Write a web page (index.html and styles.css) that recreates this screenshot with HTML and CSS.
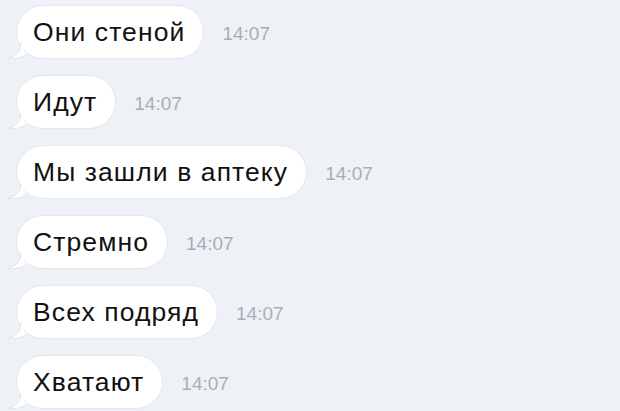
FILE: index.html
```html
<!DOCTYPE html>
<html lang="ru">
<head>
<meta charset="utf-8">
<link rel="stylesheet" href="styles.css">
</head>
<body>
<div class="chat">
  <div class="row"><div class="bubble"><svg class="tail" viewBox="0 0 20 16"><path d="M14 0 C14 8 10 13 0 16 C8 16 14 15 19 12 Z" fill="#fff"/><path d="M14 0 C14 8 10 13 0 16 C8 16 14 15 19 12" fill="none" stroke="#dfe3ea" stroke-width="1"/></svg><span class="text">Они стеной</span></div><span class="time">14:07</span></div>
  <div class="row"><div class="bubble"><svg class="tail" viewBox="0 0 20 16"><path d="M14 0 C14 8 10 13 0 16 C8 16 14 15 19 12 Z" fill="#fff"/><path d="M14 0 C14 8 10 13 0 16 C8 16 14 15 19 12" fill="none" stroke="#dfe3ea" stroke-width="1"/></svg><span class="text">Идут</span></div><span class="time">14:07</span></div>
  <div class="row"><div class="bubble"><svg class="tail" viewBox="0 0 20 16"><path d="M14 0 C14 8 10 13 0 16 C8 16 14 15 19 12 Z" fill="#fff"/><path d="M14 0 C14 8 10 13 0 16 C8 16 14 15 19 12" fill="none" stroke="#dfe3ea" stroke-width="1"/></svg><span class="text">Мы зашли в аптеку</span></div><span class="time">14:07</span></div>
  <div class="row"><div class="bubble"><svg class="tail" viewBox="0 0 20 16"><path d="M14 0 C14 8 10 13 0 16 C8 16 14 15 19 12 Z" fill="#fff"/><path d="M14 0 C14 8 10 13 0 16 C8 16 14 15 19 12" fill="none" stroke="#dfe3ea" stroke-width="1"/></svg><span class="text">Стремно</span></div><span class="time">14:07</span></div>
  <div class="row"><div class="bubble"><svg class="tail" viewBox="0 0 20 16"><path d="M14 0 C14 8 10 13 0 16 C8 16 14 15 19 12 Z" fill="#fff"/><path d="M14 0 C14 8 10 13 0 16 C8 16 14 15 19 12" fill="none" stroke="#dfe3ea" stroke-width="1"/></svg><span class="text">Всех подряд</span></div><span class="time">14:07</span></div>
  <div class="row"><div class="bubble"><svg class="tail" viewBox="0 0 20 16"><path d="M14 0 C14 8 10 13 0 16 C8 16 14 15 19 12 Z" fill="#fff"/><path d="M14 0 C14 8 10 13 0 16 C8 16 14 15 19 12" fill="none" stroke="#dfe3ea" stroke-width="1"/></svg><span class="text">Хватают</span></div><span class="time">14:07</span></div>
</div>
</body>
</html>
```
FILE: styles.css
```css
html, body {
  margin: 0;
  padding: 0;
  background: #eef1f6;
  width: 620px;
  height: 411px;
  overflow: hidden;
}
.chat {
  display: flex;
  flex-direction: column;
  gap: 16px;
  padding: 5px 0 0 16px;
  font-family: "Liberation Sans", Arial, sans-serif;
}
.row {
  display: flex;
  align-items: center;
  gap: 18px;
}
.bubble {
  position: relative;
  background: #fff;
  border: 1px solid #e3e7ee;
  border-radius: 28px;
  height: 54px;
  box-sizing: border-box;
  padding: 0 18px 0 16px;
  display: flex;
  align-items: center;
}
.text {
  position: relative;
  font-size: 26.5px;
  letter-spacing: 1.1px;
  color: #111;
  z-index: 2;
}
.tail {
  position: absolute;
  left: -10px;
  bottom: -1px;
  width: 20px;
  height: 16px;
  z-index: 1;
}
.time {
  font-size: 19px;
  color: #a9aeb6;
  padding-top: 4px;
}
```
